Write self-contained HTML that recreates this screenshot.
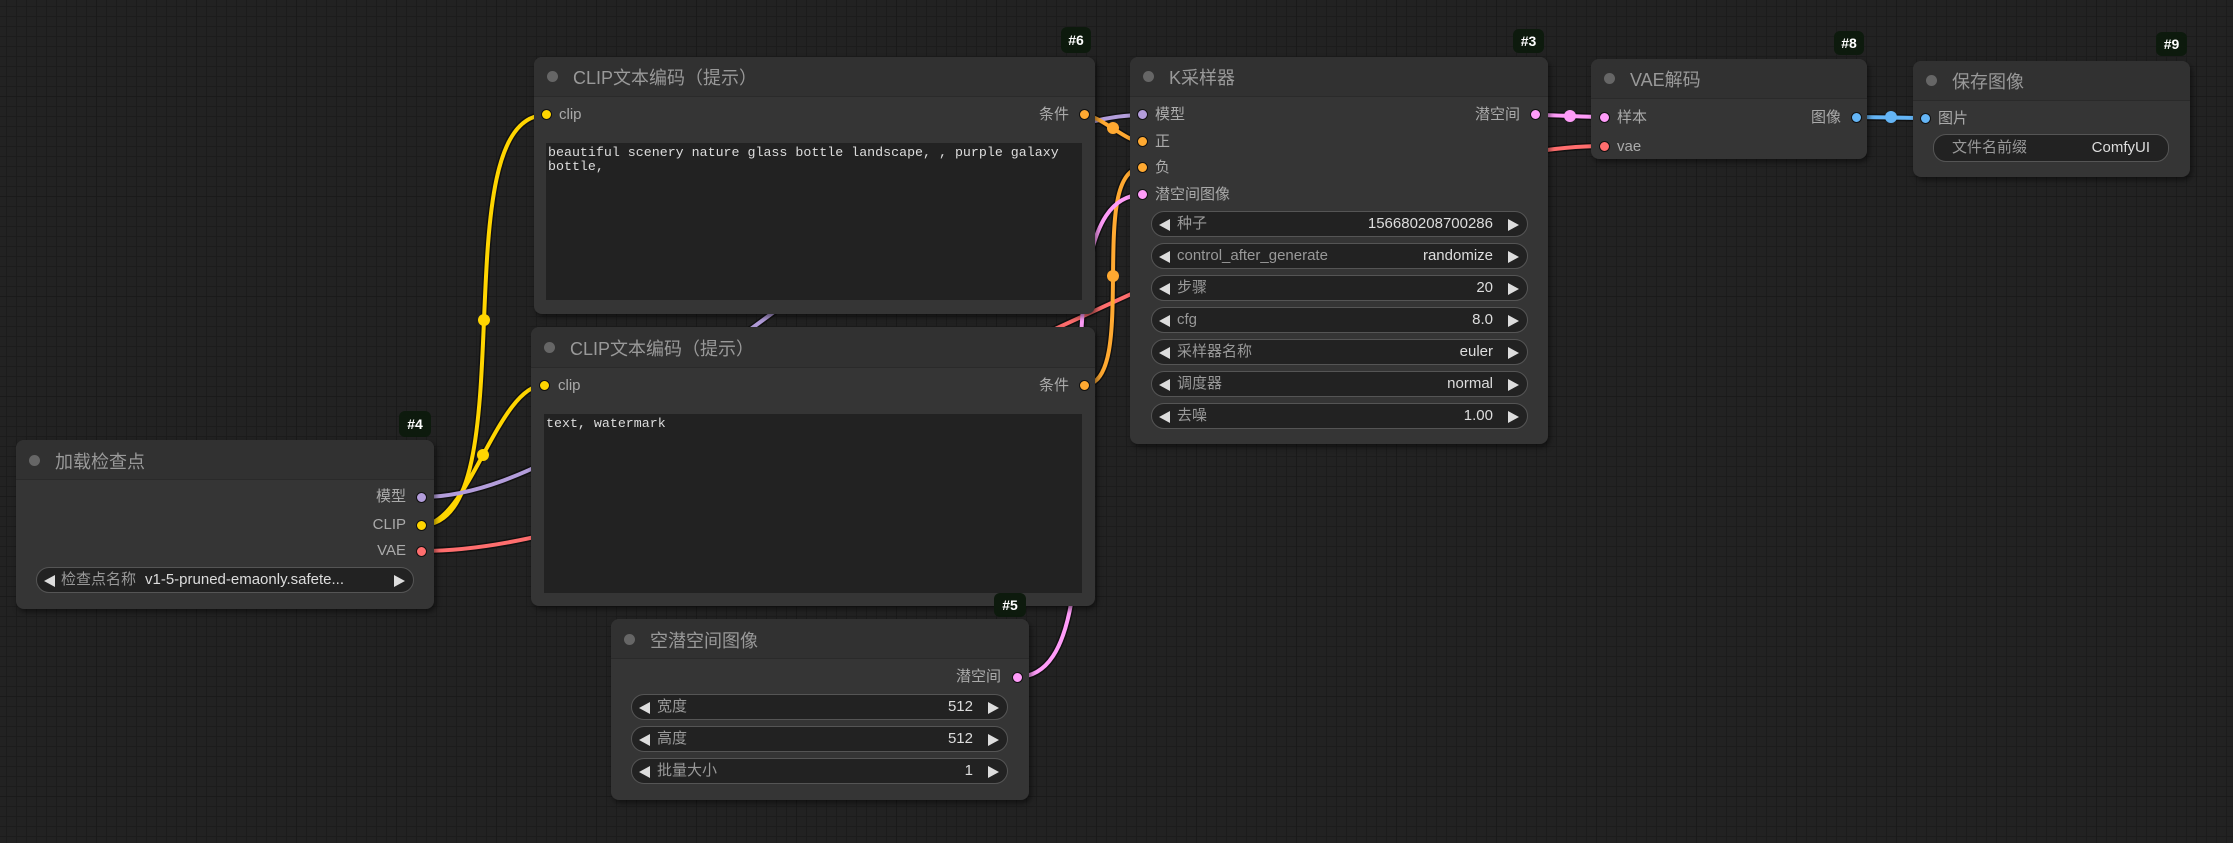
<!DOCTYPE html>
<html><head><meta charset="utf-8"><style>
*{margin:0;padding:0;box-sizing:border-box}
body{width:2233px;height:843px;overflow:hidden;position:relative;font-family:"Liberation Sans","Noto Sans CJK SC",sans-serif;
background-color:#222;
background-image:linear-gradient(#1a1a1a 1px,transparent 1px),linear-gradient(90deg,#1a1a1a 1px,transparent 1px),linear-gradient(#1c1c1c 1px,transparent 1px),linear-gradient(90deg,#1c1c1c 1px,transparent 1px);
background-size:100px 100px,100px 100px,10px 10px,10px 10px;background-position:-4px -4px}
.node{position:absolute;background:#353535;border-radius:8px;box-shadow:2px 3px 6px rgba(0,0,0,.5)}
.title{position:absolute;left:0;right:0;top:0;background:#313131;border-radius:8px 8px 0 0;border-bottom:1px solid #2a2a2a;color:#999;font-size:18px}
.title .d{position:absolute;left:13px;width:11px;height:11px;border-radius:50%;background:#666}
.title span{position:absolute;left:39px}
.badge{position:absolute;background:#0d1a0d;color:#fff;font-weight:bold;font-size:14px;border-radius:6px;text-align:center;line-height:26px}
.lbl{position:absolute;color:#aaa;font-size:15px;line-height:18px}
.dot{position:absolute;width:11px;height:11px;border-radius:50%;border:1px solid #111}
.ta{position:absolute;background:#222;color:#ddd;font-family:"Liberation Mono",monospace;font-size:13.3px;line-height:14px;padding:3px 2px}
.w{position:absolute;height:26px;background:#222;border:1.5px solid #555;border-radius:13px;font-size:15px;line-height:23px;color:#ddd}
.w .l{position:absolute;left:25px;color:#999}
.w .v{position:absolute;right:34px}
.w .a1,.w .a2{position:absolute;top:7px;width:0;height:0;border-top:6px solid transparent;border-bottom:6px solid transparent}
.w .a1{left:7px;border-right:11px solid #ddd}
.w .a2{right:8px;border-left:11px solid #ddd}
</style></head><body>

<svg width="2233" height="843" style="position:absolute;left:0;top:0">
<g fill="none" stroke-linecap="round">
<g stroke="#111" stroke-width="7">
<path d="M422,525 C529,525 439,115 546,115"/>
<path d="M422,525 C468,525 498,385 544,385"/>
<path d="M422,497 C626,497 938,115 1142,115"/>
<path d="M422,551 C734,551 1292,146 1604,146"/>
<path d="M1084,115 C1100,115 1126,142 1142,142"/>
<path d="M1084,385 C1140,385 1086,168 1142,168"/>
<path d="M1017,677 C1141,677 1018,195 1142,195"/>
<path d="M1536,115 C1553,115 1587,117 1604,117"/>
<path d="M1857,117 C1874,117 1908,118 1925,118"/>
</g>
<g stroke-width="4">
<path stroke="#FFD500" d="M422,525 C529,525 439,115 546,115"/>
<path stroke="#FFD500" d="M422,525 C468,525 498,385 544,385"/>
<path stroke="#B39DDB" d="M422,497 C626,497 938,115 1142,115"/>
<path stroke="#FF6E6E" d="M422,551 C734,551 1292,146 1604,146"/>
<path stroke="#FFA931" d="M1084,115 C1100,115 1126,142 1142,142"/>
<path stroke="#FFA931" d="M1084,385 C1140,385 1086,168 1142,168"/>
<path stroke="#FF9CF9" d="M1017,677 C1141,677 1018,195 1142,195"/>
<path stroke="#FF9CF9" d="M1536,115 C1553,115 1587,117 1604,117"/>
<path stroke="#64B5F6" d="M1857,117 C1874,117 1908,118 1925,118"/>
</g></g>
<circle cx="484" cy="320" r="6" fill="#FFD500"/>
<circle cx="483" cy="455" r="6" fill="#FFD500"/>
<circle cx="1113" cy="128" r="6" fill="#FFA931"/>
<circle cx="1113" cy="276" r="6" fill="#FFA931"/>
<circle cx="1570" cy="116" r="6" fill="#FF9CF9"/>
<circle cx="1891" cy="117" r="6" fill="#64B5F6"/>
</svg>

<div class="badge" style="left:1061px;top:27px;width:30px;height:26px">#6</div>
<div class="node" style="left:534px;top:57px;width:561px;height:257px">
<div class="title" style="height:40px"><div class="d" style="top:14px"></div><span style="top:7px">CLIP文本编码（提示）</span></div>
<div class="dot" style="left:7px;top:52px;background:#FFD500"></div><div class="lbl" style="left:25px;top:49px">clip</div>
<div class="lbl" style="right:26px;top:49px">条件</div><div class="dot" style="right:5px;top:52px;background:#FFA931"></div>
<div class="ta" style="left:12px;top:86px;width:536px;height:157px">beautiful scenery nature glass bottle landscape, , purple galaxy bottle,</div>
</div>

<div class="node" style="left:531px;top:327px;width:564px;height:279px">
<div class="title" style="height:41px"><div class="d" style="top:15px"></div><span style="top:8px">CLIP文本编码（提示）</span></div>
<div class="dot" style="left:8px;top:53px;background:#FFD500"></div><div class="lbl" style="left:27px;top:50px">clip</div>
<div class="lbl" style="right:26px;top:50px">条件</div><div class="dot" style="right:5px;top:53px;background:#FFA931"></div>
<div class="ta" style="left:13px;top:87px;width:538px;height:179px">text, watermark</div>
</div>
<div class="badge" style="left:994px;top:593px;width:32px;height:24px;line-height:24px">#5</div>

<div class="badge" style="left:399px;top:411px;width:32px;height:26px">#4</div>
<div class="node" style="left:16px;top:440px;width:418px;height:169px">
<div class="title" style="height:40px"><div class="d" style="top:15px"></div><span style="top:8px">加载检查点</span></div>
<div class="lbl" style="right:28px;top:48px">模型</div><div class="dot" style="right:7px;top:52px;background:#B39DDB"></div>
<div class="lbl" style="right:28px;top:76px">CLIP</div><div class="dot" style="right:7px;top:80px;background:#FFD500"></div>
<div class="lbl" style="right:28px;top:102px">VAE</div><div class="dot" style="right:7px;top:106px;background:#FF6E6E"></div>
<div class="w" style="left:20px;top:127px;width:378px"><div class="a1"></div><span class="l" style="left:24px">检查点名称</span><span style="position:absolute;left:108px;color:#ddd">v1-5-pruned-emaonly.safete...</span><div class="a2"></div></div>
</div>

<div class="node" style="left:611px;top:619px;width:418px;height:181px">
<div class="title" style="height:40px"><div class="d" style="top:15px"></div><span style="top:8px">空潜空间图像</span></div>
<div class="lbl" style="right:28px;top:49px">潜空间</div><div class="dot" style="right:6px;top:53px;background:#FF9CF9"></div>
<div class="w" style="left:20px;top:75px;width:377px"><div class="a1"></div><span class="l">宽度</span><span class="v">512</span><div class="a2"></div></div>
<div class="w" style="left:20px;top:107px;width:377px"><div class="a1"></div><span class="l">高度</span><span class="v">512</span><div class="a2"></div></div>
<div class="w" style="left:20px;top:139px;width:377px"><div class="a1"></div><span class="l">批量大小</span><span class="v">1</span><div class="a2"></div></div>
</div>

<div class="badge" style="left:1513px;top:29px;width:31px;height:24px;line-height:24px">#3</div>
<div class="node" style="left:1130px;top:57px;width:418px;height:387px">
<div class="title" style="height:40px"><div class="d" style="top:14px"></div><span style="top:7px">K采样器</span></div>
<div class="dot" style="left:7px;top:52px;background:#B39DDB"></div><div class="lbl" style="left:25px;top:49px">模型</div>
<div class="dot" style="left:7px;top:79px;background:#FFA931"></div><div class="lbl" style="left:25px;top:76px">正</div>
<div class="dot" style="left:7px;top:105px;background:#FFA931"></div><div class="lbl" style="left:25px;top:102px">负</div>
<div class="dot" style="left:7px;top:132px;background:#FF9CF9"></div><div class="lbl" style="left:25px;top:129px">潜空间图像</div>
<div class="lbl" style="right:28px;top:49px">潜空间</div><div class="dot" style="right:7px;top:52px;background:#FF9CF9"></div>
<div class="w" style="left:21px;top:154px;width:377px"><div class="a1"></div><span class="l">种子</span><span class="v">156680208700286</span><div class="a2"></div></div>
<div class="w" style="left:21px;top:186px;width:377px"><div class="a1"></div><span class="l">control_after_generate</span><span class="v">randomize</span><div class="a2"></div></div>
<div class="w" style="left:21px;top:218px;width:377px"><div class="a1"></div><span class="l">步骤</span><span class="v">20</span><div class="a2"></div></div>
<div class="w" style="left:21px;top:250px;width:377px"><div class="a1"></div><span class="l">cfg</span><span class="v">8.0</span><div class="a2"></div></div>
<div class="w" style="left:21px;top:282px;width:377px"><div class="a1"></div><span class="l">采样器名称</span><span class="v">euler</span><div class="a2"></div></div>
<div class="w" style="left:21px;top:314px;width:377px"><div class="a1"></div><span class="l">调度器</span><span class="v">normal</span><div class="a2"></div></div>
<div class="w" style="left:21px;top:346px;width:377px"><div class="a1"></div><span class="l">去噪</span><span class="v">1.00</span><div class="a2"></div></div>
</div>

<div class="badge" style="left:1834px;top:31px;width:30px;height:24px;line-height:24px">#8</div>
<div class="node" style="left:1591px;top:59px;width:276px;height:100px">
<div class="title" style="height:40px"><div class="d" style="top:14px"></div><span style="top:7px">VAE解码</span></div>
<div class="dot" style="left:8px;top:53px;background:#FF9CF9"></div><div class="lbl" style="left:26px;top:50px">样本</div>
<div class="dot" style="left:8px;top:82px;background:#FF6E6E"></div><div class="lbl" style="left:26px;top:79px">vae</div>
<div class="lbl" style="right:26px;top:50px">图像</div><div class="dot" style="right:5px;top:53px;background:#64B5F6"></div>
</div>

<div class="badge" style="left:2156px;top:32px;width:31px;height:24px;line-height:24px">#9</div>
<div class="node" style="left:1913px;top:61px;width:277px;height:116px">
<div class="title" style="height:40px"><div class="d" style="top:14px"></div><span style="top:7px">保存图像</span></div>
<div class="dot" style="left:7px;top:52px;background:#64B5F6"></div><div class="lbl" style="left:25px;top:49px">图片</div>
<div class="w" style="left:20px;top:73px;width:236px;height:28px;line-height:25px"><span class="l" style="left:18px">文件名前缀</span><span class="v" style="right:18px">ComfyUI</span></div>
</div>

</body></html>
